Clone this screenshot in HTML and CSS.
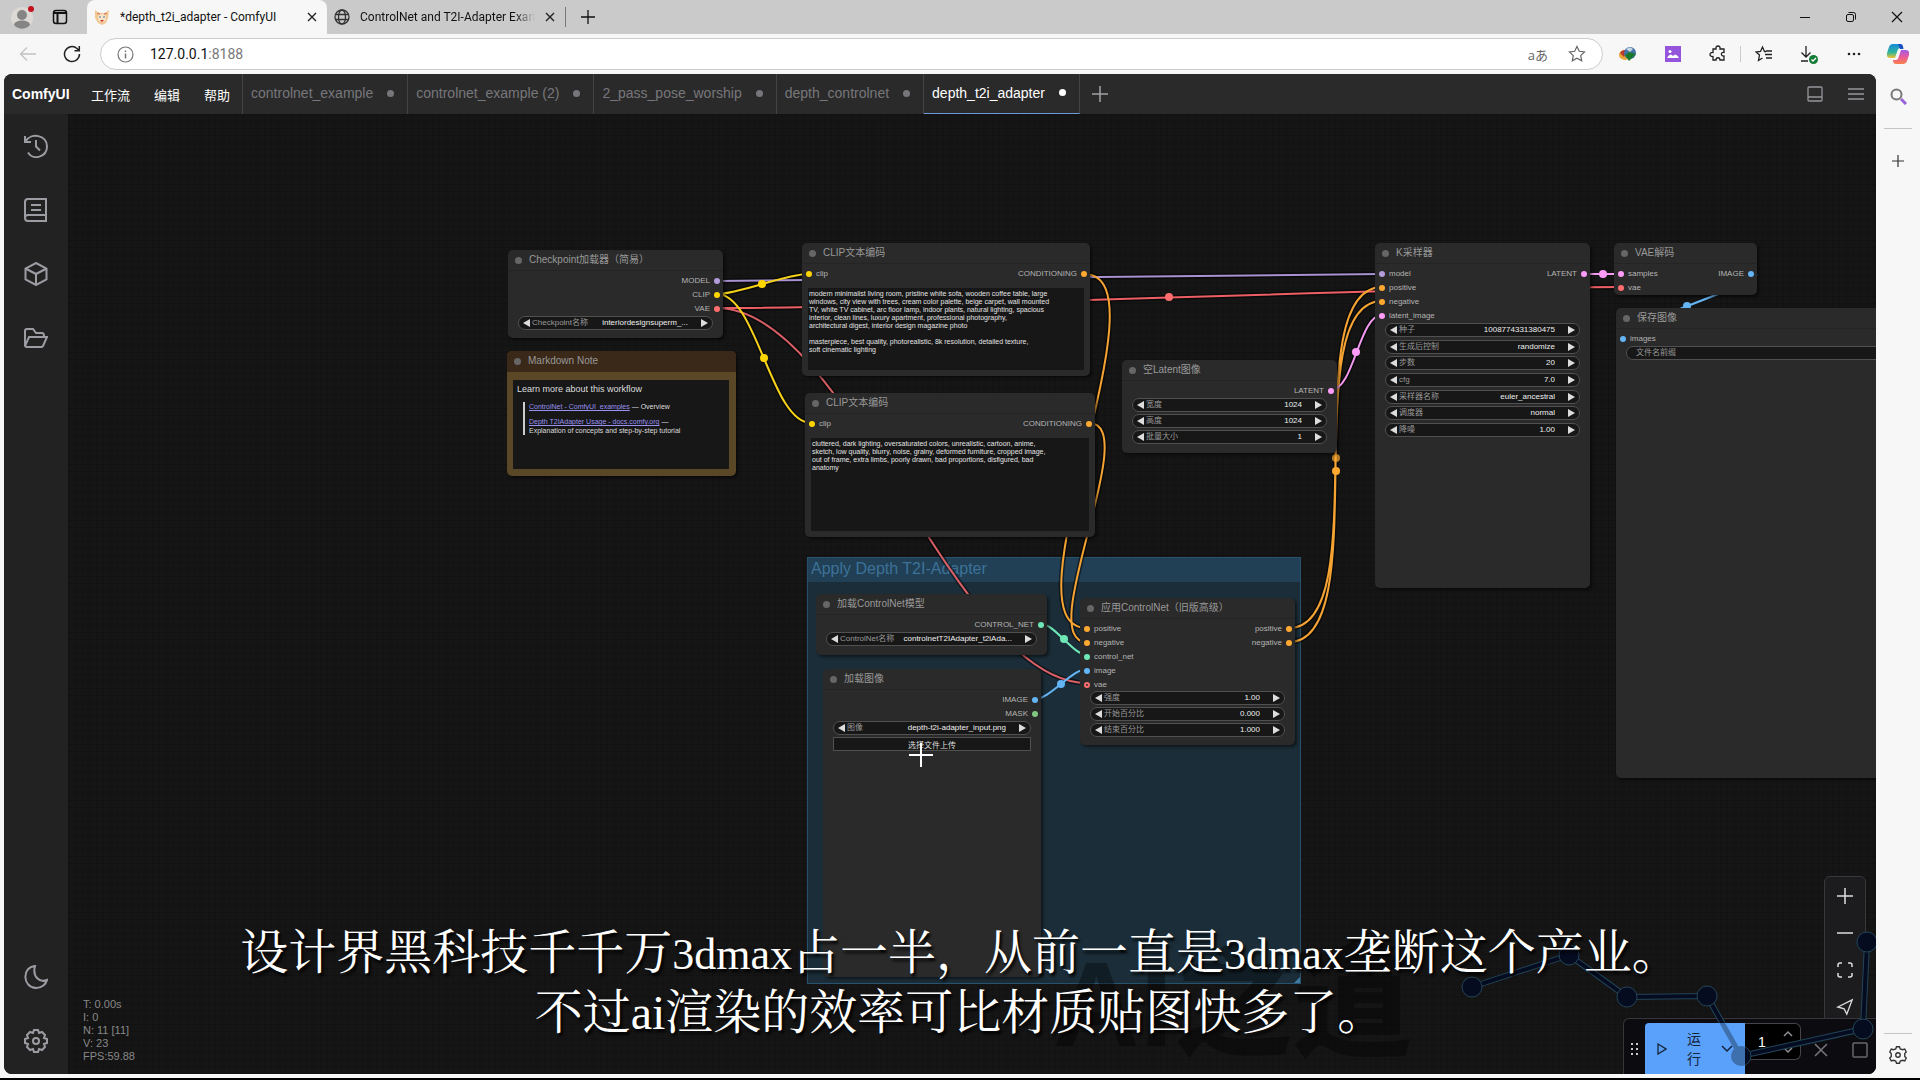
FILE: index.html
```html
<!DOCTYPE html>
<html lang="zh-CN">
<head>
    <meta charset="UTF-8">
    <meta name="viewport" content="width=device-width, initial-scale=1.0">
    <title>*depth_t2i_adapter - ComfyUI</title>
    <link rel="stylesheet" href="styles.css">
</head>
<body>
    <!-- Browser tabs -->
    <header class="tabstrip">
        <button class="profile" aria-label="Profile">
            <svg width="26" height="26" viewBox="0 0 26 26"><circle cx="12" cy="14" r="11" fill="#dcd9d4"/><circle cx="12" cy="11" r="5" fill="#858585"/><path d="M4 21c0-6 16-6 16 0-4 5-12 5-16 0z" fill="#858585"/><circle cx="21" cy="5" r="3" fill="#c50f1f"/></svg>
        </button>
        <button class="tab-actions" aria-label="Tab actions">
            <svg width="16" height="16" viewBox="0 0 16 16" fill="none" stroke="#111" stroke-width="1.5"><rect x="1.500" y="1.500" width="13" height="13" rx="2.500"/><path d="M2 4h12M5.500 4v10" stroke-width="2"/></svg>
        </button>
        <div class="btab active">
            <svg width="16" height="16" viewBox="0 0 16 16"><path d="M1 1l4 3h6l4-3-1 8-2 5-4 2-4-2-3-5z" fill="#f1c893"/><path d="M3 5l2-1 1 3M13 5l-2-1-1 3" stroke="#d9745a" fill="none"/><circle cx="8" cy="9" r="4" fill="#fbe3c8"/><path d="M5 8h2M9 8h2" stroke="#4a7ba6"/><path d="M6 11h4l-2 2z" fill="#c22f2f"/></svg>
            <span class="btab-title">*depth_t2i_adapter - ComfyUI</span>
            <button aria-label="Close tab"><svg width="10" height="10" viewBox="0 0 10 10"><path d="M1 1l8 8M9 1l-8 8" stroke="#222" stroke-width="1.400"/></svg></button>
        </div>
        <div class="btab">
            <svg width="16" height="16" viewBox="0 0 16 16" fill="none" stroke="#333" stroke-width="1.300"><circle cx="8" cy="8" r="7"/><ellipse cx="8" cy="8" rx="3.500" ry="7"/><path d="M1.500 5.500h13M1.500 10.500h13"/></svg>
            <span class="btab-title fade">ControlNet and T2I-Adapter Examples</span>
            <button aria-label="Close tab"><svg width="10" height="10" viewBox="0 0 10 10"><path d="M1 1l8 8M9 1l-8 8" stroke="#222" stroke-width="1.400"/></svg></button>
        </div>
        <button class="new-tab" aria-label="New tab"><svg width="14" height="14" viewBox="0 0 14 14"><path d="M7 0v14M0 7h14" stroke="#111" stroke-width="1.300"/></svg></button>
        <div class="window-buttons">
            <button aria-label="Minimize"><svg width="12" height="12" viewBox="0 0 12 12"><path d="M1 6.500h10" stroke="#111"/></svg></button>
            <button aria-label="Restore"><svg width="12" height="12" viewBox="0 0 12 12" fill="none" stroke="#111"><rect x="1.500" y="3.500" width="7" height="7" rx="1.500"/><path d="M3.500 1.500h5q2 0 2 2v5"/></svg></button>
            <button aria-label="Close"><svg width="12" height="12" viewBox="0 0 12 12"><path d="M1 1l10 10M11 1L1 11" stroke="#111" stroke-width="1.200"/></svg></button>
        </div>
    </header>

    <!-- Address bar -->
    <div class="toolbar">
        <button aria-label="Back"><svg width="18" height="16" viewBox="0 0 18 16" fill="none" stroke="#c2c2c2" stroke-width="1.300"><path d="M17 8H2M8 1.500L1.500 8 8 14.500"/></svg></button>
        <button aria-label="Refresh"><svg width="18" height="18" viewBox="0 0 18 18" fill="none" stroke="#222" stroke-width="1.500"><path d="M16.500 9a7.500 7.500 0 1 1-2.500-5.500l2 2M16.300 1v4.800h-4.800"/></svg></button>
        <div class="address">
            <svg width="17" height="17" viewBox="0 0 17 17" fill="none" stroke="#777" stroke-width="1.200"><circle cx="8.500" cy="8.500" r="7.500"/><path d="M8.500 7.500v5M8.500 4.500v1.500" stroke-width="1.500"/></svg>
            <a href="#" class="url">127.0.0.1<span>:8188</span></a>
            <button class="translate" aria-label="Translate">aあ</button>
            <button aria-label="Favorite"><svg width="18" height="18" viewBox="0 0 18 18" fill="none" stroke="#666" stroke-width="1.200"><path d="M9 1.500l2.300 4.800 5.200.700-3.800 3.600 1 5.200L9 13.300l-4.700 2.500 1-5.200L1.500 7l5.200-.700z"/></svg></button>
        </div>
        <div class="extensions">
            <button aria-label="Download manager"><svg width="18" height="16" viewBox="0 0 18 16"><ellipse cx="6" cy="9" rx="6" ry="5" fill="#e7a53a"/><path d="M1 7q3-5 7-2l-3 6z" fill="#b93b2a"/><circle cx="11" cy="7" r="6" fill="#4472a6"/><path d="M7 3q4-3 7 0l-3 3z" fill="#c8d7e4"/><path d="M6 9l4-3 7 2-7 7z" fill="#19782c"/></svg></button>
            <button aria-label="Pictures"><svg width="16" height="16" viewBox="0 0 16 16"><path d="M0 0h16v16H0z" fill="#9455dc"/><circle cx="5" cy="5.500" r="1.500" fill="#fff"/><path d="M2 12q3-6 6-2 3-4 6 2z" fill="#fff"/></svg></button>
            <button aria-label="Extensions"><svg width="18" height="18" viewBox="0 0 18 18" fill="none" stroke="#222" stroke-width="1.300"><path d="M4 4h3c-1-4 5-4 4 0h4v3.500c-3.500-1-3.500 4 0 3.500V15h-4c0-3-4-3-4 0H4v-3.500c-4 .500-4-4.500 0-4z"/></svg></button>
            <i class="divider"></i>
            <button aria-label="Favorites"><svg width="18" height="18" viewBox="0 0 18 18" fill="none" stroke="#222" stroke-width="1.300"><path d="M11 6.500H9.500L7.500 2l-2 4.500-4.500.500 3.500 3-1 5.500 4-2.500M11 6h6M10 9.500h7M11 13h6"/></svg></button>
            <button aria-label="Downloads"><svg width="20" height="20" viewBox="0 0 20 20" fill="none" stroke="#222" stroke-width="1.300"><path d="M7 2v11M2.500 8.500L7 13l4.500-4.500M2 17h7"/><circle cx="14.500" cy="15.500" r="4.500" fill="#127c34" stroke="none"/><path d="M12.500 15.500l1.500 1.500 3-3" stroke="#fff"/></svg></button>
            <button aria-label="Settings and more"><svg width="14" height="4" viewBox="0 0 14 4" fill="#222"><circle cx="2" cy="2" r="1.300"/><circle cx="7" cy="2" r="1.300"/><circle cx="12" cy="2" r="1.300"/></svg></button>
        </div>
        <button class="copilot" aria-label="Copilot">
            <svg width="22" height="20" viewBox="0 0 22 20"><defs><linearGradient id="cp1" x1="0" y1="0" x2="0" y2="1"><stop offset="0" stop-color="#168bdc"/><stop offset=".6" stop-color="#32b59a"/><stop offset="1" stop-color="#f2c230"/></linearGradient><linearGradient id="cp2" x1="0" y1="0" x2="0" y2="1"><stop offset="0" stop-color="#a25be8"/><stop offset=".5" stop-color="#ea5a9a"/><stop offset="1" stop-color="#f98149"/></linearGradient></defs><path d="M6 0h7q3 0 3 4h-3q-2 0-3 4l-2 6H3q-4 0-3-5l2-6q1-3 4-3z" fill="url(#cp1)"/><path d="M16 20H9q-3 0-3-4h3q2 0 3-4l2-6h5q4 0 3 5l-2 6q-1 3-4 3z" fill="url(#cp2)"/><path d="M11 0h2q3 0 3.500 5H13z" fill="#1b4fc4"/></svg>
        </button>
    </div>

    <div class="window">
        <div class="app">
            <nav class="menubar">
                <strong>ComfyUI</strong>
                <button class="menu">工作流</button>
                <button class="menu">编辑</button>
                <button class="menu">帮助</button>
                <div class="workflows">
                    <button>controlnet_example</button>
                    <button>controlnet_example (2)</button>
                    <button>2_pass_pose_worship</button>
                    <button>depth_controlnet</button>
                    <button class="current">depth_t2i_adapter</button>
                </div>
                <button class="add" aria-label="New workflow"><svg width="16" height="16" viewBox="0 0 16 16"><path d="M8 0v16M0 8h16" stroke="#a3a3a8" stroke-width="1.500"/></svg></button>
                <div class="panel-buttons">
                    <button aria-label="Toggle bottom panel"><svg width="16" height="16" viewBox="0 0 16 16" fill="none" stroke="#96969c" stroke-width="1.300"><rect x="1" y="1" width="14" height="14" rx="1"/><path d="M1 11h14"/></svg></button>
                    <button aria-label="Menu"><svg width="16" height="12" viewBox="0 0 16 12"><path d="M0 1h16M0 6h16M0 11h16" stroke="#96969c" stroke-width="1.300"/></svg></button>
                </div>
            </nav>

            <div class="workspace">
                <aside class="sidebar">
                    <button aria-label="Queue"><svg viewBox="0 0 24 24"><path d="M1 2v6h6M1.500 7.500C7-2 23 1 23 12.500 23 23 9 27 4 18.500M12 6v6.500l4 4"/></svg></button>
                    <button aria-label="Node library"><svg viewBox="0 0 24 24"><path d="M4 1h18v22H4q-3 0-3-3V4q0-3 3-3zM1 20q0-3 3-3h18M7 7h10M7 12h10"/></svg></button>
                    <button aria-label="Model library"><svg viewBox="0 0 24 24"><path d="M12 1l10.500 5.500v11L12 23 1.500 17.500v-11zM1.500 6.500L12 12l10.500-5.500M12 12v11"/></svg></button>
                    <button aria-label="Workflows"><svg viewBox="0 0 24 24"><path d="M1 20V5q0-2 2-2h6l3 4h6q2 0 2 3v1M1 20l4-9h18l-4 9q-.500 1-2 1H3q-2 0-2-2"/></svg></button>
                    <button class="push" aria-label="Theme"><svg viewBox="0 0 24 24"><path d="M11 1C-2 2-2 22 12 23c6 0 10-4 11-8-7 3-15-3-12-14z"/></svg></button>
                    <button aria-label="Settings"><svg viewBox="0 0 24 24"><path d="M10 1h4l1 3 3-1 3 3-1 3 3 1v4l-3 1 1 3-3 3-3-1-1 3h-4l-1-3-3 1-3-3 1-3-3-1v-4l3-1-1-3 3-3 3 1z"/><circle cx="12" cy="12" r="3"/></svg></button>
                </aside>

                <main class="canvas">
                    <div class="graph">
                        <section class="group">
                            <h2>Apply Depth T2I-Adapter</h2>
                        </section>

                        <!-- Links between slots -->
                        <svg class="links" width="100%" height="100%" fill="none">
                            <g class="halo">
                                <path d="M717 281C883 281 1216 274 1382 274"/>
                                <path d="M717 308C943 308 1395 287 1621 287"/>
                                <path d="M717 308C849 308 955 683 1087 683"/>
                                <path d="M717 294C740 294 785 274 808 274M717 294C757 294 771 423 811 423"/>
                                <path d="M1084 274C1172 274 999 628 1087 628M1089 423C1144 423 1032 642 1087 642"/>
                                <path d="M1289 628C1377 628 1294 287 1382 287M1289 642C1377 642 1294 301 1382 301"/>
                                <path d="M1331 390C1354 390 1359 315 1382 315"/>
                            </g>
                            <path stroke="#a892d2" d="M717 281C883 281 1216 274 1382 274"/>
                            <path stroke="#ed5f64" d="M717 308C943 308 1395 287 1621 287"/>
                            <path stroke="#d85f66" d="M717 308C849 308 955 683 1087 683"/>
                            <path stroke="#f7d21a" d="M717 294C740 294 785 274 808 274M717 294C757 294 771 423 811 423"/>
                            <path stroke="#f5a332" d="M1084 274C1172 274 999 628 1087 628M1089 423C1144 423 1032 642 1087 642"/>
                            <path stroke="#f5a332" d="M1289 628C1377 628 1294 287 1382 287M1289 642C1377 642 1294 301 1382 301"/>
                            <path stroke="#f39af0" d="M1331 390C1354 390 1359 315 1382 315M1584 274H1621"/>
                            <path stroke="#64b5f6" d="M1752 274C1788 274 1587 338 1623 338M1035 699C1050 699 1072 669 1087 669"/>
                            <path stroke="#6ee7b7" d="M1041 624C1055 624 1073 655 1087 655"/>
                            <g stroke="none">
                                <g fill="#ffd500"><circle cx="762" cy="284" r="4"/><circle cx="764" cy="358" r="4"/></g>
                                <circle cx="1169" cy="297" r="4" fill="#ff6e6e"/>
                                <g fill="#ffa931"><circle cx="1336" cy="458" r="4" opacity=".7"/><circle cx="1336" cy="471" r="4"/></g>
                                <g fill="#ff9cf9"><circle cx="1356" cy="352" r="4"/><circle cx="1603" cy="274" r="4"/></g>
                                <g fill="#64b5f6"><circle cx="1687" cy="306" r="4"/><circle cx="1061" cy="684" r="4"/></g>
                                <circle cx="1064" cy="639" r="4" fill="#6ee7b7"/>
                            </g>
                        </svg>

                        <article class="node checkpoint">
                            <h3>Checkpoint加载器（简易）</h3>
                            <div class="slots">
                                <p><span class="out model">MODEL</span></p>
                                <p><span class="out clip">CLIP</span></p>
                                <p><span class="out vae">VAE</span></p>
                            </div>
                            <div class="widgets">
                                <div class="widget"><button aria-label="Previous"></button><label for="ckpt">Checkpoint名称</label><select id="ckpt"><option>interiordesignsuperm_...</option></select><button aria-label="Next"></button></div>
                            </div>
                        </article>

                        <article class="node note">
                            <h3>Markdown Note</h3>
                            <div class="markdown">
                                <h4>Learn more about this workflow</h4>
                                <blockquote>
                                    <p><a href="#">ControlNet - ComfyUI_examples</a> — Overview</p>
                                    <p><a href="#">Depth T2IAdapter Usage - docs.comfy.org</a> —<br>Explanation of concepts and step-by-step tutorial</p>
                                </blockquote>
                            </div>
                        </article>

                        <article class="node prompt-positive">
                            <h3>CLIP文本编码</h3>
                            <div class="slots">
                                <p><span class="in clip">clip</span><span class="out cond">CONDITIONING</span></p>
                            </div>
                            <textarea aria-label="Positive prompt">modern minimalist living room, pristine white sofa, wooden coffee table, large
windows, city view with trees, cream color palette, beige carpet, wall mounted
TV, white TV cabinet, arc floor lamp, indoor plants, natural lighting, spacious
interior, clean lines, luxury apartment, professional photography,
architectural digest, interior design magazine photo

masterpiece, best quality, photorealistic, 8k resolution, detailed texture,
soft cinematic lighting</textarea>
                        </article>

                        <article class="node prompt-negative">
                            <h3>CLIP文本编码</h3>
                            <div class="slots">
                                <p><span class="in clip">clip</span><span class="out cond">CONDITIONING</span></p>
                            </div>
                            <textarea aria-label="Negative prompt">cluttered, dark lighting, oversaturated colors, unrealistic, cartoon, anime,
sketch, low quality, blurry, noise, grainy, deformed furniture, cropped image,
out of frame, extra limbs, poorly drawn, bad proportions, disfigured, bad
anatomy</textarea>
                        </article>

                        <article class="node latent">
                            <h3>空Latent图像</h3>
                            <div class="slots">
                                <p><span class="out lat">LATENT</span></p>
                            </div>
                            <div class="widgets">
                                <div class="widget"><button aria-label="Decrease"></button><label for="w">宽度</label><input id="w" value="1024"><button aria-label="Increase"></button></div>
                                <div class="widget"><button aria-label="Decrease"></button><label for="h">高度</label><input id="h" value="1024"><button aria-label="Increase"></button></div>
                                <div class="widget"><button aria-label="Decrease"></button><label for="batch">批量大小</label><input id="batch" value="1"><button aria-label="Increase"></button></div>
                            </div>
                        </article>

                        <article class="node sampler">
                            <h3>K采样器</h3>
                            <div class="slots">
                                <p><span class="in model">model</span><span class="out lat">LATENT</span></p>
                                <p><span class="in cond">positive</span></p>
                                <p><span class="in cond">negative</span></p>
                                <p><span class="in lat">latent_image</span></p>
                            </div>
                            <div class="widgets">
                                <div class="widget"><button aria-label="Decrease"></button><label for="seed">种子</label><input id="seed" value="1008774331380475"><button aria-label="Increase"></button></div>
                                <div class="widget"><button aria-label="Previous"></button><label for="after">生成后控制</label><select id="after"><option>randomize</option></select><button aria-label="Next"></button></div>
                                <div class="widget"><button aria-label="Decrease"></button><label for="steps">步数</label><input id="steps" value="20"><button aria-label="Increase"></button></div>
                                <div class="widget"><button aria-label="Decrease"></button><label for="cfg">cfg</label><input id="cfg" value="7.0"><button aria-label="Increase"></button></div>
                                <div class="widget"><button aria-label="Previous"></button><label for="sampler">采样器名称</label><select id="sampler"><option>euler_ancestral</option></select><button aria-label="Next"></button></div>
                                <div class="widget"><button aria-label="Previous"></button><label for="scheduler">调度器</label><select id="scheduler"><option>normal</option></select><button aria-label="Next"></button></div>
                                <div class="widget"><button aria-label="Decrease"></button><label for="denoise">降噪</label><input id="denoise" value="1.00"><button aria-label="Increase"></button></div>
                            </div>
                        </article>

                        <article class="node decode">
                            <h3>VAE解码</h3>
                            <div class="slots">
                                <p><span class="in lat">samples</span><span class="out img">IMAGE</span></p>
                                <p><span class="in vae">vae</span></p>
                            </div>
                        </article>

                        <article class="node save">
                            <h3>保存图像</h3>
                            <div class="slots">
                                <p><span class="in img">images</span></p>
                            </div>
                            <div class="widgets">
                                <div class="widget plain"><label for="prefix">文件名前缀</label><input id="prefix" value="ComfyUI"></div>
                            </div>
                        </article>

                        <article class="node load-controlnet">
                            <h3>加载ControlNet模型</h3>
                            <div class="slots">
                                <p><span class="out net">CONTROL_NET</span></p>
                            </div>
                            <div class="widgets">
                                <div class="widget"><button aria-label="Previous"></button><label for="cn">ControlNet名称</label><select id="cn"><option>controlnetT2IAdapter_t2iAda...</option></select><button aria-label="Next"></button></div>
                            </div>
                        </article>

                        <article class="node load-image">
                            <h3>加载图像</h3>
                            <div class="slots">
                                <p><span class="out img">IMAGE</span></p>
                                <p><span class="out mask">MASK</span></p>
                            </div>
                            <div class="widgets">
                                <div class="widget"><button aria-label="Previous"></button><label for="img">图像</label><select id="img"><option>depth-t2i-adapter_input.png</option></select><button aria-label="Next"></button></div>
                                <button class="upload">选择文件上传</button>
                            </div>
                        </article>

                        <article class="node apply">
                            <h3>应用ControlNet（旧版高级）</h3>
                            <div class="slots">
                                <p><span class="in cond">positive</span><span class="out cond">positive</span></p>
                                <p><span class="in cond">negative</span><span class="out cond">negative</span></p>
                                <p><span class="in net">control_net</span></p>
                                <p><span class="in img">image</span></p>
                                <p><span class="in vae optional">vae</span></p>
                            </div>
                            <div class="widgets">
                                <div class="widget"><button aria-label="Decrease"></button><label for="strength">强度</label><input id="strength" value="1.00"><button aria-label="Increase"></button></div>
                                <div class="widget"><button aria-label="Decrease"></button><label for="start">开始百分比</label><input id="start" value="0.000"><button aria-label="Increase"></button></div>
                                <div class="widget"><button aria-label="Decrease"></button><label for="end">结束百分比</label><input id="end" value="1.000"><button aria-label="Increase"></button></div>
                            </div>
                        </article>

                        <svg class="cursor" width="24" height="24" viewBox="0 0 24 24"><path d="M12 0v24M0 12h24" stroke="#fff" stroke-width="2"/></svg>
                    </div>

                    <pre class="stats">T: 0.00s
I: 0
N: 11 [11]
V: 23
FPS:59.88</pre>

                    <div class="zoom-controls">
                        <button aria-label="Zoom in"><svg viewBox="0 0 16 16"><path d="M8 0v16M0 8h16"/></svg></button>
                        <button aria-label="Zoom out"><svg viewBox="0 0 16 16"><path d="M0 8h16"/></svg></button>
                        <button aria-label="Fit view"><svg viewBox="0 0 16 16"><path d="M1 5V3q0-2 2-2h2M11 1h2q2 0 2 2v2M15 11v2q0 2-2 2h-2M5 15H3q-2 0-2-2v-2"/></svg></button>
                        <button aria-label="Select mode"><svg viewBox="0 0 18 18"><path d="M17 1L1 9l7 2 3 6z"/></svg></button>
                    </div>

                    <div class="actionbar">
                        <svg class="grip" width="7" height="12" viewBox="0 0 7 12" fill="#c8c8cc"><path d="M0 0h2v2H0zM5 0h2v2H5zM0 5h2v2H0zM5 5h2v2H5zM0 10h2v2H0zM5 10h2v2H5z"/></svg>
                        <button class="run">
                            <svg width="10" height="12" viewBox="0 0 10 12" fill="none" stroke="#14243c" stroke-width="1.300"><path d="M1 1l8 5-8 5z"/></svg>
                            <span>运行</span>
                            <svg width="12" height="8" viewBox="0 0 12 8" fill="none" stroke="#14243c" stroke-width="1.500"><path d="M1 1l5 5 5-5"/></svg>
                        </button>
                        <div class="count">
                            <input aria-label="Batch count" value="1">
                            <svg width="10" height="24" viewBox="0 0 10 24" fill="none" stroke="#8d8d92" stroke-width="1.500"><path d="M1 6l4-4 4 4M1 18l4 4 4-4"/></svg>
                        </div>
                        <button aria-label="Cancel"><svg width="14" height="14" viewBox="0 0 14 14"><path d="M1 1l12 12M13 1L1 13" stroke="#77777c" stroke-width="1.500"/></svg></button>
                        <button aria-label="Clear"><svg width="16" height="16" viewBox="0 0 16 16" fill="none" stroke="#66666b" stroke-width="1.500"><rect x="1" y="1" width="14" height="14" rx="1"/></svg></button>
                    </div>

                    <!-- Channel watermark -->
                    <p class="brand">AI之道</p>
                    <svg class="brand-line" width="420" height="140" viewBox="1460 930 420 140">
                        <defs>
                            <clipPath id="onBlue"><path d="M1645 1023h100v51h-100z"/></clipPath>
                            <clipPath id="offBlue"><path clip-rule="evenodd" d="M1450 920h440v160h-440zM1645 1023h100v57h-100z"/></clipPath>
                        </defs>
                        <g clip-path="url(#offBlue)">
                            <path d="M1472 987l97-32 58 42 80-1 34 60 122-27 4-87" fill="none" stroke="#234458" stroke-width="6"/>
                            <path d="M1472 987l97-32 58 42 80-1 34 60 122-27 4-87" fill="none" stroke="#050c20" stroke-width="4"/>
                            <g fill="#050c20" stroke="#234458"><circle cx="1472" cy="987" r="10"/><circle cx="1569" cy="955" r="10"/><circle cx="1627" cy="997" r="10"/><circle cx="1707" cy="996" r="10"/><circle cx="1741" cy="1056" r="10"/><circle cx="1863" cy="1029" r="10"/><circle cx="1867" cy="942" r="10"/></g>
                        </g>
                        <g clip-path="url(#onBlue)"><path d="M1707 996l34 60" stroke="#3f70ae" stroke-width="5"/><circle cx="1741" cy="1056" r="10" fill="#3f70ae"/></g>
                    </svg>
                </main>
            </div>
        </div>

        <aside class="edge-bar">
            <button aria-label="Search"><svg width="17" height="17" viewBox="0 0 17 17" fill="none"><circle cx="6.500" cy="6.500" r="5" stroke="#777" stroke-width="2"/><path d="M11 11l5 5" stroke="#9a62d8" stroke-width="3"/></svg></button>
            <hr>
            <button aria-label="Customize"><svg width="12" height="12" viewBox="0 0 12 12"><path d="M6 0v12M0 6h12" stroke="#333" stroke-width="1.200"/></svg></button>
            <hr class="push">
            <button aria-label="Sidebar settings"><svg width="18" height="18" viewBox="0 0 24 24" fill="none" stroke="#333" stroke-width="1.800"><path d="M10 1h4l1 3 3 1 3-1 2 4-2 2v4l2 2-2 4-3-1-3 1-1 3h-4l-1-3-3-1-3 1-2-4 2-2v-4L1 8l2-4 3 1 3-1z"/><circle cx="12" cy="12" r="3"/></svg></button>
        </aside>
    </div>

    <p class="subtitle">设计界黑科技千千万<span>3dmax</span>占一半，从前一直是<span>3dmax</span>垄断这个产业。<br>不过ai渲染的效率可比材质贴图快多了。</p>
</body>
</html>
```
FILE: styles.css
```css
*, *::before, *::after {
    box-sizing: border-box;
}
body {
    margin: 0;
    height: 100vh;
    display: flex;
    flex-direction: column;
    overflow: hidden;
    position: relative;
    background: #f7f7f7;
    border-bottom: 2px solid #000;
    font-family: "Liberation Sans", "Noto Sans CJK SC", sans-serif;
}
button {
    background: none;
    border: 0;
    padding: 0;
    color: inherit;
    font: inherit;
    display: flex;
    align-items: center;
    justify-content: center;
    flex-shrink: 0;
}
h2, h3, h4, p, pre, blockquote {
    margin: 0;
    font-weight: normal;
}

/* Browser */
.tabstrip {
    height: 34px;
    flex-shrink: 0;
    display: flex;
    align-items: center;
    background: #cacaca;
    font-family: Roboto, "Noto Sans CJK SC", sans-serif;
    font-size: 12px;
    color: #111;
}
.profile {
    width: 46px;
}
.tab-actions {
    width: 28px;
    margin-right: 13px;
}
.btab {
    height: 34px;
    width: 238px;
    padding: 0 10px 0 7px;
    display: flex;
    align-items: center;
    gap: 10px;
    white-space: nowrap;
}
.btab.active {
    width: 240px;
    background: #f7f7f7;
    border-radius: 8px 8px 0 0;
}
.btab-title {
    flex: 1;
    min-width: 0;
    overflow: hidden;
}
.fade {
    mask-image: linear-gradient(to right, #000 88%, transparent);
}
.new-tab {
    height: 20px;
    padding-left: 15px;
    border-left: 1px solid #777;
}
.window-buttons {
    display: flex;
    margin-left: auto;
}
.window-buttons button {
    width: 46px;
    height: 34px;
}
.toolbar {
    height: 40px;
    flex-shrink: 0;
    display: flex;
    align-items: center;
    padding-left: 6px;
}
.toolbar > button {
    width: 44px;
}
.address {
    flex: 1;
    height: 32px;
    margin-left: 6px;
    padding: 0 16px;
    display: flex;
    align-items: center;
    background: #fff;
    border: 1px solid #ccc;
    border-radius: 16px;
}
.url {
    flex: 1;
    margin-left: 16px;
    font: 14px Roboto, sans-serif;
    color: #111;
    text-decoration: none;
}
.url span {
    color: #777;
}
.translate {
    margin-right: 20px;
    font: 13px "Open Sans", "Noto Sans CJK JP", sans-serif;
    color: #666;
}
.extensions {
    display: flex;
    align-items: center;
    padding-left: 2px;
}
.extensions button {
    width: 45px;
}
.divider {
    width: 1px;
    height: 16px;
    background: #ccc;
}
.window {
    flex: 1;
    min-height: 0;
    display: flex;
    padding: 0 0 4px 4px;
}
.edge-bar {
    width: 44px;
    display: flex;
    flex-direction: column;
    align-items: center;
}
.edge-bar button {
    height: 44px;
}
.edge-bar button:last-child {
    height: 38px;
}
.edge-bar hr {
    width: 28px;
    margin: 10px 0;
    border: 0;
    border-top: 1px solid #c4c4c4;
}
.edge-bar .push {
    margin: auto 0 2px;
}

/* App shell */
.app {
    flex: 1;
    min-width: 0;
    display: flex;
    flex-direction: column;
    overflow: hidden;
    border-radius: 8px;
    background: #141414;
}
.menubar {
    height: 40px;
    flex-shrink: 0;
    display: flex;
    align-items: center;
    padding-left: 8px;
    background: #2a2a2a;
    color: #fff;
    font-size: 14px;
}
.menubar strong {
    width: 67px;
}
.menu {
    margin: 0 12px;
    font-size: 13px;
}
.workflows {
    display: flex;
    height: 40px;
    border-left: 1px solid #444;
}
.workflows button {
    padding: 0 13px 2px 8px;
    border-right: 1px solid #444;
    color: #77777b;
}
.workflows button::after {
    content: "";
    width: 7px;
    height: 7px;
    margin-left: 14px;
    border-radius: 50%;
    background: currentColor;
}
.workflows .current {
    color: #fff;
    border-bottom: 1px solid #6b9bd8;
}
.add {
    margin-left: 12px;
}
.panel-buttons {
    display: flex;
    margin-left: auto;
}
.panel-buttons button {
    width: 41px;
}
.workspace {
    flex: 1;
    min-height: 0;
    display: flex;
}
.sidebar {
    width: 64px;
    display: flex;
    flex-direction: column;
    padding-bottom: 1px;
    background: #222;
}
.sidebar button {
    height: 64px;
}
.sidebar .push {
    margin-top: auto;
}
.sidebar svg {
    width: 24px;
    height: 24px;
    fill: none;
    stroke: #9c9ca3;
    stroke-width: 2;
}

/* Canvas */
.canvas {
    flex: 1;
    position: relative;
    overflow: hidden;
    background: repeating-linear-gradient(to right, rgba(0, 0, 0, 0.12) 0 1px, transparent 1px 7px), repeating-linear-gradient(#121212 0 1px, #151515 1px 7px);
}
/* The graph is panned so that its origin is the corner of the window */
.graph {
    position: absolute;
    left: -68px;
    top: -114px;
    right: 0;
    bottom: 0;
}
.links {
    position: absolute;
    left: 0;
    top: 0;
    stroke-width: 2;
}
.halo {
    stroke: #000;
    stroke-opacity: 0.5;
    stroke-width: 5;
}
.group {
    position: absolute;
    left: 807px;
    top: 557px;
    width: 494px;
    height: 427px;
    background: #1b2d38;
    border: 1px solid #27526d;
}
.group h2 {
    height: 24px;
    padding-left: 3px;
    font-size: 16px;
    line-height: 22px;
    background: #213f55;
    color: #3c7298;
}
.group::after {
    content: "";
    position: absolute;
    right: 0;
    bottom: 0;
    border: 3px solid #3b7aa3;
    border-top-color: transparent;
    border-left-color: transparent;
}
.node {
    position: absolute;
    display: flex;
    flex-direction: column;
    background: #2a2a2a;
    border-radius: 5px;
    box-shadow: 2px 2px 3px rgba(0, 0, 0, 0.5);
    font-size: 8px;
    color: #b4b4b4;
}
.node h3 {
    height: 21px;
    flex-shrink: 0;
    display: flex;
    align-items: center;
    gap: 7px;
    padding-left: 7px;
    border-bottom: 1px solid #242424;
    font-size: 10px;
    line-height: 12px;
    color: #999;
    white-space: nowrap;
}
.node h3::before {
    content: "";
    width: 7px;
    height: 7px;
    border-radius: 50%;
    background: #666;
}
.slots {
    padding: 3px 3px 0 4px;
}
.slots p {
    height: 14px;
    display: flex;
    align-items: center;
    line-height: 14px;
}
.in, .out {
    display: flex;
    align-items: center;
    gap: 4px;
}
.out {
    flex-direction: row-reverse;
    margin-left: auto;
}
.in::before, .out::before {
    content: "";
    width: 6px;
    height: 6px;
    border-radius: 50%;
    background: var(--slot);
}
.optional::before {
    background: #2a2a2a;
    border: 2px solid var(--slot);
}
.model { --slot: #b39ddb; }
.clip { --slot: #ffd500; }
.vae { --slot: #ff6e6e; }
.cond { --slot: #ffa931; }
.lat { --slot: #ff9cf9; }
.img { --slot: #64b5f6; }
.net { --slot: #6ee7b7; }
.mask { --slot: #81c784; }
.widgets {
    display: flex;
    flex-direction: column;
    gap: 2px;
    padding: 0 10px;
}
.widget {
    height: 14px;
    display: flex;
    align-items: center;
    padding: 0 4px;
    background: #171717;
    border: 1px solid #505050;
    border-radius: 7px;
    line-height: 12px;
    white-space: nowrap;
}
.widget button::before {
    content: "";
    border: 4px solid transparent;
    border-left-width: 0;
    border-right: 7px solid #ddd;
}
.widget button:last-child::before {
    border-right-width: 0;
    border-left: 7px solid #ddd;
}
.widget label {
    margin-left: 2px;
    color: #999;
}
.widget input, .widget select {
    flex: 1;
    min-width: 0;
    margin: 0 13px 0 4px;
    padding: 0;
    border: 0;
    appearance: none;
    background: none;
    color: #eee;
    font: inherit;
    text-align: right;
    text-align-last: right;
}
.plain {
    padding-left: 7px;
}
.upload {
    height: 14px;
    background: #171717;
    border: 1px solid #505050;
    color: #ddd;
}
.node textarea {
    flex: 1;
    margin: 7px 6px 6px;
    padding: 2px 1px;
    border: 0;
    resize: none;
    overflow: hidden;
    background: #171717;
    color: #e4e4e4;
    font: 7px/8px "Liberation Sans", sans-serif;
    white-space: pre;
}
.checkpoint {
    left: 508px;
    top: 250px;
    width: 215px;
    height: 88px;
}
.note {
    left: 507px;
    top: 351px;
    width: 229px;
    height: 125px;
    background: #5a4726;
}
.note h3 {
    background: #3a2818;
    border-radius: 5px 5px 0 0;
    border-bottom-color: #3a2818;
}
.markdown {
    flex: 1;
    margin: 8px 7px 7px 6px;
    padding: 3px 4px;
    background: #171717;
    color: #ddd;
}
.markdown h4 {
    font-size: 9px;
    line-height: 12px;
}
.markdown blockquote {
    margin: 7px 0 0 6px;
    padding-left: 4px;
    border-left: 2px solid #ccc;
    font-size: 7px;
    line-height: 9px;
    white-space: nowrap;
}
.markdown p + p {
    margin-top: 6px;
}
.markdown a {
    color: #9a92f0;
}
.prompt-positive {
    left: 802px;
    top: 243px;
    width: 288px;
    height: 133px;
}
.prompt-negative {
    left: 805px;
    top: 393px;
    width: 290px;
    height: 144px;
}
.latent {
    left: 1122px;
    top: 360px;
    width: 215px;
    height: 93px;
}
.sampler {
    left: 1375px;
    top: 243px;
    width: 215px;
    height: 345px;
}
.sampler .widgets {
    height: 114px;
    justify-content: space-between;
}
.decode {
    left: 1614px;
    top: 243px;
    width: 143px;
    height: 52px;
}
.save {
    left: 1616px;
    top: 308px;
    width: 400px;
    height: 470px;
}
.load-controlnet {
    left: 816px;
    top: 594px;
    width: 231px;
    height: 61px;
}
.load-image {
    left: 823px;
    top: 669px;
    width: 218px;
    height: 308px;
}
.apply {
    left: 1080px;
    top: 598px;
    width: 215px;
    height: 147px;
}
.apply .slots {
    display: flex;
    flex-direction: column;
    height: 72px;
}
.apply .slots p {
    flex: 1;
}
.cursor {
    position: absolute;
    left: 909px;
    top: 743px;
}
.stats {
    position: absolute;
    left: 15px;
    bottom: 11px;
    font: 11px/13px "Liberation Sans", sans-serif;
    color: #888;
}

/* Canvas overlays */
.zoom-controls {
    position: absolute;
    right: 10px;
    bottom: 48px;
    width: 42px;
    display: flex;
    flex-direction: column;
    background: #1c1c1f;
    border: 1px solid #38383c;
    border-radius: 6px;
}
.zoom-controls button {
    height: 37px;
}
.zoom-controls svg {
    width: 16px;
    height: 16px;
    fill: none;
    stroke: #ddd;
    stroke-width: 1.5;
    overflow: visible;
}
.actionbar {
    position: absolute;
    right: 0;
    bottom: 0;
    width: 253px;
    height: 56px;
    display: flex;
    align-items: flex-start;
    padding: 4px 0 0 7px;
    overflow: hidden;
    background: #0c0c10;
    border: 1px solid #38383c;
    border-width: 1px 0 0 1px;
    border-radius: 6px 0 0 0;
}
.grip {
    flex-shrink: 0;
    align-self: center;
    margin-right: 7px;
}
.run {
    width: 100px;
    height: 51px;
    justify-content: space-between;
    padding: 0 12px;
    background: #5aa1fb;
    border-radius: 4px 0 0 0;
    color: #14243c;
    font-size: 14px;
    line-height: 20px;
}
.run span {
    width: 14px;
}
.count {
    width: 56px;
    height: 37px;
    flex-shrink: 0;
    display: flex;
    align-items: center;
    justify-content: space-between;
    padding: 0 7px 0 13px;
    background: #000;
    border: 1px solid #44444a;
    border-left: 0;
    border-radius: 0 6px 6px 0;
}
.count input {
    width: 20px;
    padding: 0;
    border: 0;
    background: none;
    color: #fff;
    font: 14px "Liberation Sans", sans-serif;
}
.actionbar > button:not(.run) {
    width: 39px;
    height: 54px;
}
.brand {
    position: absolute;
    left: 985px;
    bottom: 0;
    font: 900 120px/140px "Liberation Sans", "Noto Sans CJK SC", sans-serif;
    color: rgba(0, 0, 0, 0.35);
}
.brand-line {
    position: absolute;
    right: -4px;
    bottom: 4px;
    pointer-events: none;
}
.subtitle {
    position: absolute;
    left: 0;
    right: 0;
    bottom: 36px;
    text-align: center;
    font-family: "Liberation Serif", "Noto Serif CJK SC", "Noto Sans CJK SC", serif;
    font-size: 48px;
    line-height: 58px;
    color: #fff;
    text-shadow: 2px 3px 3px #000;
    pointer-events: none;
}
.subtitle span {
    font-size: 44px;
}
```
